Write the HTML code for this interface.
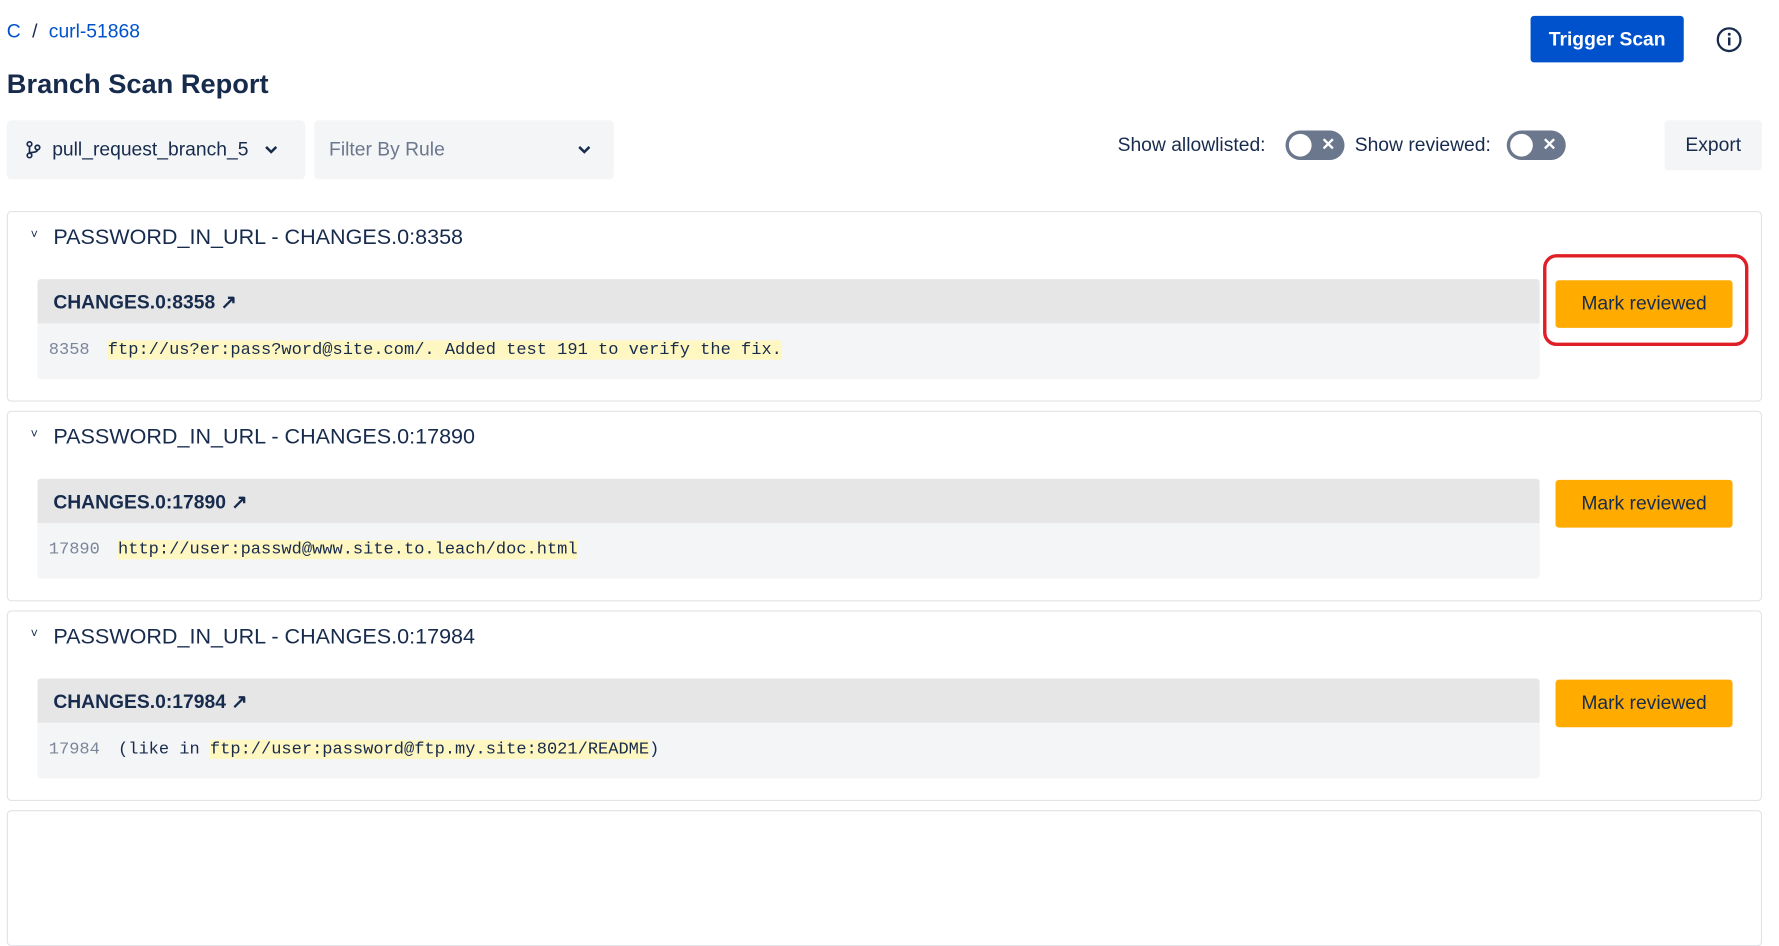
<!DOCTYPE html>
<html><head><meta charset="utf-8"><style>
*{box-sizing:border-box;margin:0;padding:0}
html,body{width:1779px;height:812px;background:#fff;overflow:hidden}
body{font-family:"Liberation Sans",sans-serif;color:#172b4d}
#w{position:absolute;left:0;top:0;width:1568px;height:716px;transform:scale(1.1346);transform-origin:0 0}
.abs{position:absolute}
.crumb{left:6px;top:18px;font-size:17px;color:#0052cc}
.crumb span{color:#172b4d;margin:0 10px}
h1{position:absolute;left:6px;top:61px;font-size:24px;font-weight:bold;color:#172b4d}
.sel{background:#f4f5f7;border-radius:4px;height:52px;top:106px;font-size:17px;display:flex;align-items:center}
.btn{border-radius:3px;display:flex;align-items:center;justify-content:center;font-size:17px}
.tog{width:52px;height:26px;border-radius:13px;background:#6b778c;top:115px}
.tog:before{content:"";position:absolute;left:3px;top:3px;width:20px;height:20px;border-radius:50%;background:#fff}
.tog:after{content:"✕";position:absolute;right:8px;top:3px;color:#fff;font-size:15px;font-weight:bold}
.card{left:6px;width:1547px;border:1px solid #e1e3e6;border-radius:4px}
.ct{position:absolute;left:40px;top:12px;font-size:19px}
.chev{position:absolute;left:20px;top:14px;font-size:11px}
.code{position:absolute;left:26px;top:59px;width:1324px;height:88px;background:#f4f5f7;border-radius:3px;overflow:hidden}
.ch{height:39px;background:#e6e6e6;font-weight:bold;font-size:17px;padding:11px 14px}
.cl{font-family:"Liberation Mono",monospace;font-size:15px;padding:15px 10px;color:#172b4d}
.cl b{font-weight:normal;color:#7a869a;margin-right:16px}
.cl i{font-style:normal;background:#fff7c2}
.mr{position:absolute;left:1364px;top:60px;width:156px;height:42px;background:#ffab00;border-radius:3px;font-size:17px;display:flex;align-items:center;justify-content:center}
</style></head><body><div id="w">
<div class="abs crumb">C<span>/</span>curl-51868</div>
<h1>Branch Scan Report</h1>
<div class="abs btn" style="left:1349px;top:14px;width:135px;height:41px;background:#0052cc;color:#fff;font-weight:bold">Trigger Scan</div>
<svg class="abs" style="left:1512px;top:23px" width="24" height="24" viewBox="0 0 24 24"><circle cx="12" cy="12" r="10" fill="none" stroke="#172b4d" stroke-width="2"/><rect x="11" y="10" width="2.2" height="7" fill="#172b4d"/><circle cx="12.1" cy="7.2" r="1.3" fill="#172b4d"/></svg>
<div class="abs sel" style="left:6px;width:263px;padding-left:16px">
<svg width="14" height="16" viewBox="0 0 14 16"><circle cx="4" cy="3" r="2" fill="none" stroke="#172b4d" stroke-width="1.5"/><circle cx="4" cy="13" r="2" fill="none" stroke="#172b4d" stroke-width="1.5"/><circle cx="11" cy="6" r="2" fill="none" stroke="#172b4d" stroke-width="1.5"/><path d="M4 5v6M11 8c0 3-7 2-7 3" fill="none" stroke="#172b4d" stroke-width="1.5"/></svg>
<span style="margin-left:10px">pull_request_branch_5</span>
<svg style="margin-left:14px" width="12" height="8" viewBox="0 0 12 8"><path d="M1.5 1.5l4.5 4.5 4.5-4.5" fill="none" stroke="#172b4d" stroke-width="2.2"/></svg></div>
<div class="abs sel" style="left:277px;width:264px;padding-left:13px;color:#6b778c">Filter By Rule
<svg style="position:absolute;right:20px" width="12" height="8" viewBox="0 0 12 8"><path d="M1.5 1.5l4.5 4.5 4.5-4.5" fill="none" stroke="#172b4d" stroke-width="2.2"/></svg></div>
<div class="abs" style="left:985px;top:118px;font-size:17px">Show allowlisted:</div>
<div class="abs tog" style="left:1133px"></div>
<div class="abs" style="left:1194px;top:118px;font-size:17px">Show reviewed:</div>
<div class="abs tog" style="left:1328px"></div>
<div class="abs btn" style="left:1467px;top:106px;width:86px;height:44px;background:#f4f5f7">Export</div>

<div class="abs card" style="top:186px;height:168px">
<div class="chev">˅</div><div class="ct">PASSWORD_IN_URL - CHANGES.0:8358</div>
<div class="code"><div class="ch">CHANGES.0:8358 ↗</div><div class="cl"><b>8358</b><i>ftp://us?er:pass?word@site.com/. Added test 191 to verify the fix.</i></div></div>
<div class="mr">Mark reviewed</div>
</div>
<div class="abs" style="left:1360px;top:224px;width:181px;height:81px;border:3px solid #e01e26;border-radius:12px"></div>
<div class="abs card" style="top:362px;height:168px">
<div class="chev">˅</div><div class="ct">PASSWORD_IN_URL - CHANGES.0:17890</div>
<div class="code"><div class="ch">CHANGES.0:17890 ↗</div><div class="cl"><b>17890</b><i>http://user:passwd@www.site.to.leach/doc.html</i></div></div>
<div class="mr">Mark reviewed</div>
</div>
<div class="abs card" style="top:538px;height:168px">
<div class="chev">˅</div><div class="ct">PASSWORD_IN_URL - CHANGES.0:17984</div>
<div class="code"><div class="ch">CHANGES.0:17984 ↗</div><div class="cl"><b>17984</b>(like in <i>ftp://user:password@ftp.my.site:8021/README</i>)</div></div>
<div class="mr">Mark reviewed</div>
</div>
<div class="abs card" style="top:714px;height:120px"></div>
</div></body></html>
